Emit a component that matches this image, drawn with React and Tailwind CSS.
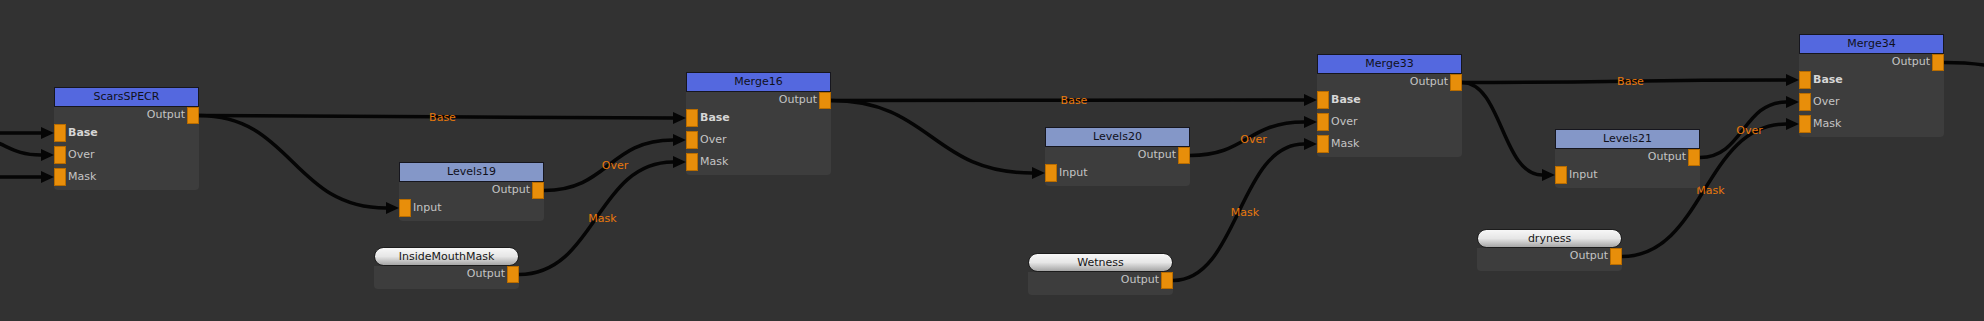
import React from 'react'

const NODE_W = 145

const nodes = [
  { id: 'scars', title: 'ScarsSPECR', kind: 'merge', x: 54, y: 87, inputs: ['Base', 'Over', 'Mask'] },
  { id: 'lv19', title: 'Levels19', kind: 'levels', x: 399, y: 162, inputs: ['Input'] },
  { id: 'imm', title: 'InsideMouthMask', kind: 'pill', x: 374, y: 247, inputs: [] },
  { id: 'm16', title: 'Merge16', kind: 'merge', x: 686, y: 72, inputs: ['Base', 'Over', 'Mask'] },
  { id: 'lv20', title: 'Levels20', kind: 'levels', x: 1045, y: 127, inputs: ['Input'] },
  { id: 'wet', title: 'Wetness', kind: 'pill', x: 1028, y: 253, inputs: [] },
  { id: 'm33', title: 'Merge33', kind: 'merge', x: 1317, y: 54, inputs: ['Base', 'Over', 'Mask'] },
  { id: 'lv21', title: 'Levels21', kind: 'levels', x: 1555, y: 129, inputs: ['Input'] },
  { id: 'dry', title: 'dryness', kind: 'pill', x: 1477, y: 229, inputs: [] },
  { id: 'm34', title: 'Merge34', kind: 'merge', x: 1799, y: 34, inputs: ['Base', 'Over', 'Mask'] },
]

const edges = [
  ['scars', 'm16', 0, 'Base'],
  ['scars', 'lv19', 0],
  ['lv19', 'm16', 1, 'Over'],
  ['imm', 'm16', 2, 'Mask'],
  ['m16', 'm33', 0, 'Base'],
  ['m16', 'lv20', 0],
  ['lv20', 'm33', 1, 'Over'],
  ['wet', 'm33', 2, 'Mask'],
  ['m33', 'm34', 0, 'Base'],
  ['m33', 'lv21', 0],
  ['lv21', 'm34', 1, 'Over'],
  ['dry', 'm34', 2, 'Mask'],
]

const byId = Object.fromEntries(nodes.map((n) => [n.id, n]))

const outPos = (n) => [n.x + NODE_W, n.y + (n.kind === 'pill' ? 27.5 : 28.5)]
const inPos = (n, i) => [n.x, n.y + 46 + 22 * i]

const curve = (x1, y1, x2, y2) => {
  const k = Math.max((x2 - x1) / 2, 20)
  return `M ${x1} ${y1} C ${x1 + k} ${y1}, ${x2 - k} ${y2}, ${x2} ${y2}`
}

const WIRE = 3.5

const Arrow = ({ x, y }) => (
  <polygon points={`${x},${y} ${x - 13},${y - 6} ${x - 13},${y + 6}`} fill="#050505" />
)

const Port = () => <div className="w-[12px] h-full bg-[#e88e0a] border border-[#b86c00] shrink-0" />

const Node = ({ node }) => {
  const header =
    node.kind === 'pill' ? (
      <div className="h-[19px] rounded-full border border-[#1c1c1c] bg-gradient-to-b from-[#f7f7f7] via-[#e6e6e6] to-[#a6a6a6] text-center text-[11px] leading-[17px] text-[#161616]">
        {node.title}
      </div>
    ) : (
      <div
        className={`h-[20px] border border-[#16161e] text-center text-[11px] leading-[18px] text-[#10101a] ${
          node.kind === 'merge' ? 'bg-[#5468df]' : 'bg-[#8497c8]'
        }`}
      >
        {node.title}
      </div>
    )

  return (
    <div className="absolute w-[145px]" style={{ left: node.x, top: node.y }}>
      {header}
      <div className={`bg-[#3d3d3d] rounded-b-[4px] ${node.kind === 'pill' ? 'pb-[6px]' : 'pb-[4px]'}`}>
        <div className="h-[17px] flex justify-end items-center gap-[2px] text-[11px] text-[#c4c4c4]">
          <span>Output</span>
          <Port />
        </div>
        {node.inputs.map((name, i) => (
          <div
            key={name}
            className={`h-[18px] flex items-center gap-[2px] text-[11px] ${i > 0 ? 'mt-[4px]' : ''} ${
              name === 'Base' ? 'font-bold text-[#d6d6d6]' : 'text-[#c4c4c4]'
            }`}
          >
            <Port />
            <span>{name}</span>
          </div>
        ))}
      </div>
    </div>
  )
}

export default function App() {
  const wires = edges.map(([from, to, idx, label]) => {
    const [x1, y1] = outPos(byId[from])
    const [x2, y2] = inPos(byId[to], idx)
    return { x1, y1, x2, y2, label }
  })

  return (
    <div className="relative w-[1984px] h-[321px] bg-[#323232] overflow-hidden font-['DejaVu_Sans',sans-serif]">
      <svg className="absolute inset-0" width="1984" height="321">
        {/* incoming wires from off-screen */}
        <path d="M -10 133 L 41 133" stroke="#050505" strokeWidth={WIRE} fill="none" />
        <Arrow x={54} y={133} />
        <path d="M -40 136 C 5 136, 5 155, 41 155" stroke="#050505" strokeWidth={WIRE} fill="none" />
        <Arrow x={54} y={155} />
        <path d="M -10 177 L 41 177" stroke="#050505" strokeWidth={WIRE} fill="none" />
        <Arrow x={54} y={177} />

        {wires.map((w, i) => (
          <g key={i}>
            <path d={curve(w.x1, w.y1, w.x2 - 13, w.y2)} stroke="#050505" strokeWidth={WIRE} fill="none" />
            <Arrow x={w.x2} y={w.y2} />
          </g>
        ))}

        {/* outgoing wire */}
        <path d="M 1944 62.5 C 1990 62.5, 2010 70, 2060 80" stroke="#050505" strokeWidth={WIRE} fill="none" />

        {wires
          .filter((w) => w.label)
          .map((w, i) => (
            <text
              key={i}
              x={(w.x1 + w.x2) / 2}
              y={(w.y1 + w.y2) / 2 + 4}
              textAnchor="middle"
              fontSize="11"
              fill="#e8780c"
              fontFamily="DejaVu Sans, sans-serif"
            >
              {w.label}
            </text>
          ))}
      </svg>

      {nodes.map((n) => (
        <Node key={n.id} node={n} />
      ))}
    </div>
  )
}
